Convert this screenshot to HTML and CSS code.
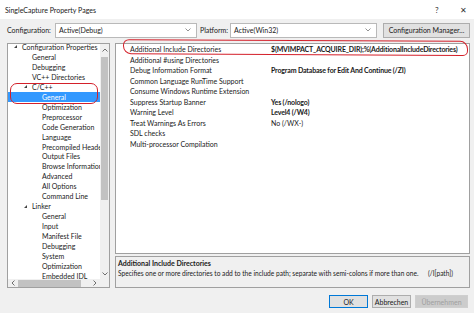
FILE: index.html
```html
<!DOCTYPE html>
<html lang="en">
<head>
    <meta charset="UTF-8">
    <title>SingleCapture Property Pages</title>
    <link rel="stylesheet" href="styles.css">
</head>
<body>
    <div class="dialog">
        <div class="titlebar">
            <span class="title">SingleCapture Property Pages</span>
            <span class="help">?</span>
            <span class="close">&#x2715;</span>
        </div>

        <div class="config-row">
            <label class="lbl">Configuration:</label>
            <div class="combo combo-config">
                <span>Active(Debug)</span>
                <svg width="6" height="4" viewBox="0 0 6 4"><polyline points="0.5,0.5 3,3 5.5,0.5" fill="none" stroke="#777" stroke-width="0.8"/></svg>
            </div>
            <label class="lbl lbl-platform">Platform:</label>
            <div class="combo combo-platform">
                <span>Active(Win32)</span>
                <svg width="6" height="4" viewBox="0 0 6 4"><polyline points="0.5,0.5 3,3 5.5,0.5" fill="none" stroke="#777" stroke-width="0.8"/></svg>
            </div>
            <button class="btn btn-manager">Configuration Manager...</button>
        </div>

        <div class="main">
            <div class="tree">
                <div class="tree-items">
                    <div class="node lvl0"><i class="tri"></i>Configuration Properties</div>
                    <div class="node lvl1">General</div>
                    <div class="node lvl1">Debugging</div>
                    <div class="node lvl1">VC++ Directories</div>
                    <div class="node lvl1 parent"><i class="tri"></i>C/C++</div>
                    <div class="node lvl2 selected">General</div>
                    <div class="node lvl2">Optimization</div>
                    <div class="node lvl2">Preprocessor</div>
                    <div class="node lvl2">Code Generation</div>
                    <div class="node lvl2">Language</div>
                    <div class="node lvl2">Precompiled Headers</div>
                    <div class="node lvl2">Output Files</div>
                    <div class="node lvl2">Browse Information</div>
                    <div class="node lvl2">Advanced</div>
                    <div class="node lvl2">All Options</div>
                    <div class="node lvl2">Command Line</div>
                    <div class="node lvl1 parent"><i class="tri"></i>Linker</div>
                    <div class="node lvl2">General</div>
                    <div class="node lvl2">Input</div>
                    <div class="node lvl2">Manifest File</div>
                    <div class="node lvl2">Debugging</div>
                    <div class="node lvl2">System</div>
                    <div class="node lvl2">Optimization</div>
                    <div class="node lvl2">Embedded IDL</div>
                </div>
                <div class="vscroll">
                    <svg width="6" height="4" viewBox="0 0 6 4"><polyline points="0.5,3.5 3,1 5.5,3.5" fill="none" stroke="#606060" stroke-width="0.9"/></svg>
                    <div class="vtrack"><div class="vthumb"></div></div>
                    <svg width="6" height="4" viewBox="0 0 6 4"><polyline points="0.5,0.5 3,3 5.5,0.5" fill="none" stroke="#606060" stroke-width="0.9"/></svg>
                </div>
                <div class="hscroll">
                    <svg width="4" height="6" viewBox="0 0 4 6"><polyline points="3.5,0.5 1,3 3.5,5.5" fill="none" stroke="#606060" stroke-width="0.9"/></svg>
                    <div class="htrack"><div class="hthumb"></div></div>
                    <svg width="4" height="6" viewBox="0 0 4 6"><polyline points="0.5,0.5 3,3 0.5,5.5" fill="none" stroke="#606060" stroke-width="0.9"/></svg>
                </div>
                <div class="corner"></div>
            </div>

            <div class="right">
                <div class="grid">
                    <div class="prop"><span class="name">Additional Include Directories</span><span class="value bold">$(MVIMPACT_ACQUIRE_DIR);%(AdditionalIncludeDirectories)</span></div>
                    <div class="prop"><span class="name">Additional #using Directories</span><span class="value"></span></div>
                    <div class="prop"><span class="name">Debug Information Format</span><span class="value bold">Program Database for Edit And Continue (/ZI)</span></div>
                    <div class="prop"><span class="name">Common Language RunTime Support</span><span class="value"></span></div>
                    <div class="prop"><span class="name">Consume Windows Runtime Extension</span><span class="value"></span></div>
                    <div class="prop"><span class="name">Suppress Startup Banner</span><span class="value bold">Yes (/nologo)</span></div>
                    <div class="prop"><span class="name">Warning Level</span><span class="value bold">Level4 (/W4)</span></div>
                    <div class="prop"><span class="name">Treat Warnings As Errors</span><span class="value">No (/WX-)</span></div>
                    <div class="prop"><span class="name">SDL checks</span><span class="value"></span></div>
                    <div class="prop"><span class="name">Multi-processor Compilation</span><span class="value"></span></div>
                </div>
                <div class="desc">
                    <div class="desc-title">Additional Include Directories</div>
                    <div class="desc-text">
                        <span>Specifies one or more directories to add to the include path; separate with semi-colons if more than one.</span>
                        <span>(/I[path])</span>
                    </div>
                </div>
            </div>
        </div>

        <div class="buttons">
            <button class="btn btn-ok">OK</button>
            <button class="btn">Abbrechen</button>
            <button class="btn btn-disabled">Übernehmen</button>
        </div>

        <!-- red markers drawn over the screenshot -->
        <div class="mark mark-prop"></div>
        <div class="mark mark-tree"></div>
    </div>
</body>
</html>
```

FILE: styles.css
```css
* {
    box-sizing: border-box;
}
body {
    margin: 0;
    padding: 0;
    font-family: Lato, "Noto Sans", sans-serif;
    font-size: 7px;
    color: #1a1a1a;
    background: #f0f0f0;
}
.dialog {
    position: relative;
    width: 474px;
    height: 313px;
    background: #f0f0f0;
    overflow: hidden;
}
.titlebar {
    height: 19px;
    background: #fff;
    display: flex;
    align-items: center;
    padding-left: 5px;
}
.title {
    flex: 1;
}
.help {
    width: 25px;
    font-size: 8px;
    color: #333;
}
.close {
    width: 14px;
    font-size: 8px;
    color: #333;
}
.config-row {
    display: flex;
    align-items: center;
    height: 16px;
    margin-top: 3px;
    padding-left: 7px;
}
.lbl {
    width: 48px;
}
.lbl-platform {
    width: 30px;
    margin-left: 3px;
}
.combo {
    height: 15px;
    border: 1px solid #b9b9b9;
    background: #fff;
    display: flex;
    align-items: center;
    justify-content: space-between;
    padding: 0 5px 0 3px;
}
.combo-config {
    width: 142px;
}
.combo-platform {
    width: 147px;
}
.btn {
    font-family: inherit;
    font-size: 7px;
    height: 13px;
    padding: 0;
    border: 1px solid #adadad;
    background: #e1e1e1;
    color: #1a1a1a;
}
.btn-manager {
    width: 87px;
    margin-left: 6px;
    height: 15px;
}
.main {
    display: flex;
    gap: 5px;
    margin-top: 5px;
    padding-left: 7px;
    height: 245px;
}
.tree {
    width: 103px;
    border: 1px solid #a0a0a0;
    background: #fff;
    display: grid;
    grid-template-columns: 1fr 9px;
    grid-template-rows: 1fr 8px;
    overflow: hidden;
}
.tree-items {
    margin-top: -2px;
    overflow: hidden;
    white-space: nowrap;
}
.node {
    height: 9.96px;
    line-height: 10px;
    display: flex;
    align-items: center;
}
.lvl0 {
    padding-left: 6px;
}
.lvl1 {
    padding-left: 24px;
}
.lvl1.parent {
    padding-left: 16px;
}
.lvl2 {
    padding-left: 34px;
}
.selected {
    background: #3399ff;
    color: #fff;
}
.tri {
    display: inline-block;
    width: 0;
    height: 0;
    border-left: 3px solid transparent;
    border-bottom: 3px solid #444;
    margin-right: 5px;
}
.vscroll {
    background: #f0f0f0;
    display: flex;
    flex-direction: column;
    align-items: center;
    padding: 4px 0 3px;
    gap: 3px;
}
.vtrack {
    flex: 1;
    width: 100%;
}
.vthumb {
    margin: 2px 1px 0;
    height: 143px;
    background: #c2c2c2;
}
.hscroll {
    background: #f0f0f0;
    display: flex;
    align-items: center;
    padding: 0 3px 0 3px;
    gap: 3px;
}
.htrack {
    flex: 1;
    height: 100%;
    display: flex;
    align-items: center;
}
.hthumb {
    width: 63px;
    height: 7px;
    background: #c2c2c2;
}
.corner {
    background: #f0f0f0;
}
.right {
    width: 355px;
    display: flex;
    flex-direction: column;
    gap: 2px;
}
.grid {
    flex: 1;
    background: #fff;
    border: 1px solid #a0a0a0;
}
.prop {
    display: flex;
    height: 10.5px;
    line-height: 10.5px;
    white-space: nowrap;
}
.name {
    width: 155px;
    padding-left: 14px;
}
.value {
    flex: 1;
}
.bold {
    font-weight: bold;
    letter-spacing: -0.16px;
}
.desc {
    height: 32px;
    border: 1px solid #a0a0a0;
    background: #f0f0f0;
    padding: 1px 2px;
}
.desc-title {
    font-weight: bold;
    line-height: 10px;
}
.desc-text {
    display: flex;
    justify-content: space-between;
    white-space: nowrap;
    font-size: 6.6px;
    line-height: 10px;
    padding-right: 14px;
}
.buttons {
    display: flex;
    justify-content: flex-end;
    gap: 4px;
    padding-right: 6px;
    margin-top: 7px;
}
.buttons .btn {
    width: 39px;
}
.btn-ok {
    border-color: #0078d7;
}
.buttons .btn-disabled {
    width: 53px;
    color: #a0a0a0;
    border-color: #cfcfcf;
    background: #cccccc;
}
.mark {
    position: absolute;
    border: 1.5px solid #d4202a;
}
.mark-prop {
    left: 123px;
    top: 40px;
    width: 345px;
    height: 15px;
    border-radius: 6px 8px 5px 8px;
    transform: rotate(0.3deg);
}
.mark-tree {
    left: 10px;
    top: 83px;
    width: 88px;
    height: 21px;
    border-radius: 7px;
}
```
